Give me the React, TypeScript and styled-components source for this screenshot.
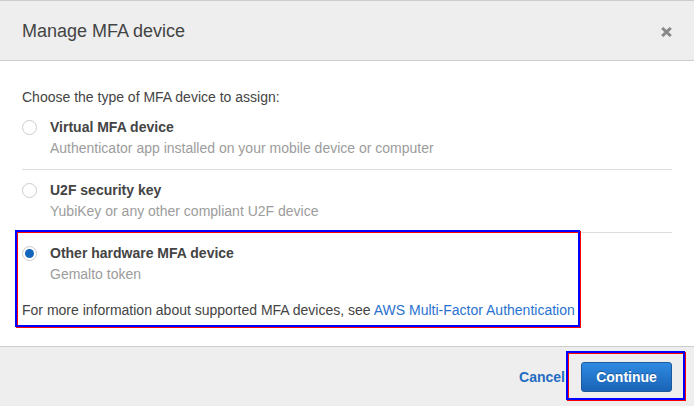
import React from "react";
import styled, { createGlobalStyle } from "styled-components";

const Global = createGlobalStyle`
  html, body { margin: 0; padding: 0; background: #fff; }
  body { font-family: "Liberation Sans", Arial, sans-serif; color: #444; }
  * { box-sizing: border-box; }
`;

const Page = styled.div`
  position: relative;
  width: 694px;
  height: 406px;
  display: flex;
  flex-direction: column;
  background: #fff;
  overflow: hidden;
`;

const Header = styled.div`
  height: 61px;
  flex: none;
  display: flex;
  align-items: center;
  justify-content: space-between;
  padding: 0 22px;
  background: #eee;
  border-top: 1px solid #ccc;
  border-bottom: 1px solid #ccc;
`;

const Title = styled.h1`
  margin: 0;
  font-size: 18px;
  font-weight: normal;
  color: #444;
  line-height: 22px;
  padding-top: 1px;
`;

const Close = styled.button`
  border: none;
  background: none;
  padding: 0;
  margin-top: 2px;
  width: 11px;
  height: 10px;
  display: flex;
  cursor: pointer;
`;

const Body = styled.div`
  flex: none;
  padding: 26px 22px 26px;
`;

const Prompt = styled.p`
  margin: 0;
  font-size: 14px;
  line-height: 20px;
  color: #444;
`;

const Option = styled.label<{ $last?: boolean }>`
  display: flex;
  align-items: flex-start;
  gap: 13px;
  padding: 10px 0 ${(p) => (p.$last ? "0" : "10px")};
  border-bottom: ${(p) => (p.$last ? "none" : "1px solid #ddd")};
  cursor: pointer;
`;

const Radio = styled.span<{ $checked?: boolean }>`
  flex: none;
  width: 15px;
  height: 15px;
  margin-top: 3px;
  border-radius: 50%;
  border: 1px solid #ccc;
  background: #fff;
  display: flex;
  align-items: center;
  justify-content: center;
  &::after {
    content: "";
    display: ${(p) => (p.$checked ? "block" : "none")};
    width: 9px;
    height: 9px;
    border-radius: 50%;
    background: #1166bb;
  }
`;

const OptionText = styled.div`
  display: flex;
  flex-direction: column;
`;

const OptionTitle = styled.span`
  font-size: 14px;
  font-weight: bold;
  line-height: 21px;
  color: #444;
`;

const OptionSub = styled.span`
  font-size: 14px;
  line-height: 21px;
  color: #9c9c9c;
`;

const Info = styled.p`
  margin: 15px 0 0;
  font-size: 14px;
  line-height: 20px;
  color: #444;
`;

const Link = styled.a`
  color: #2a72cf;
  text-decoration: none;
`;

const Footer = styled.div`
  flex: 1;
  background: #eee;
  border-top: 1px solid #ccc;
  display: flex;
  align-items: center;
  justify-content: flex-end;
  gap: 16px;
  padding: 0 22px 0 0;
`;

const CancelLink = styled.a`
  font-size: 14px;
  font-weight: bold;
  color: #1f6cc2;
  text-decoration: none;
  cursor: pointer;
`;

const PrimaryButton = styled.button`
  width: 91px;
  height: 30px;
  border-radius: 3px;
  border: 1px solid #1b5a9c;
  background: linear-gradient(#2e8ae2, #1a63b6);
  color: #fff;
  font-family: "Liberation Sans", Arial, sans-serif;
  font-size: 14px;
  font-weight: bold;
  text-shadow: 0 -1px 0 rgba(0, 0, 0, 0.3);
  cursor: pointer;
`;

const Highlight = styled.div<{ $color: string; $dx: number; $dy: number }>`
  position: absolute;
  border: 2px solid ${(p) => p.$color};
  pointer-events: none;
  transform: translate(${(p) => p.$dx}px, ${(p) => p.$dy}px);
`;

const boxes = [
  { left: 15, top: 230, width: 565, height: 97 },
  { left: 566, top: 351, width: 119, height: 49 },
];

export default function App() {
  return (
    <Page>
      <Global />
      <Header>
        <Title>Manage MFA device</Title>
        <Close aria-label="Close">
          <svg width="11" height="10" viewBox="0 0 11 10">
            <path d="M1.2 1 L9.8 9 M9.8 1 L1.2 9" stroke="#888" strokeWidth="3" strokeLinecap="butt" />
          </svg>
        </Close>
      </Header>
      <Body>
        <Prompt>Choose the type of MFA device to assign:</Prompt>
        <Option>
          <Radio />
          <OptionText>
            <OptionTitle>Virtual MFA device</OptionTitle>
            <OptionSub>Authenticator app installed on your mobile device or computer</OptionSub>
          </OptionText>
        </Option>
        <Option>
          <Radio />
          <OptionText>
            <OptionTitle>U2F security key</OptionTitle>
            <OptionSub>YubiKey or any other compliant U2F device</OptionSub>
          </OptionText>
        </Option>
        <Option $last>
          <Radio $checked />
          <OptionText>
            <OptionTitle>Other hardware MFA device</OptionTitle>
            <OptionSub>Gemalto token</OptionSub>
          </OptionText>
        </Option>
        <Info>
          For more information about supported MFA devices, see{" "}
          <Link href="#">AWS Multi-Factor Authentication</Link>
        </Info>
      </Body>
      <Footer>
        <CancelLink>Cancel</CancelLink>
        <PrimaryButton>Continue</PrimaryButton>
      </Footer>
      {boxes.map((b, i) => (
        <React.Fragment key={i}>
          <Highlight $color="#ff0000" $dx={1} $dy={1} style={b} />
          <Highlight $color="#0000ff" $dx={0} $dy={0} style={b} />
        </React.Fragment>
      ))}
    </Page>
  );
}
